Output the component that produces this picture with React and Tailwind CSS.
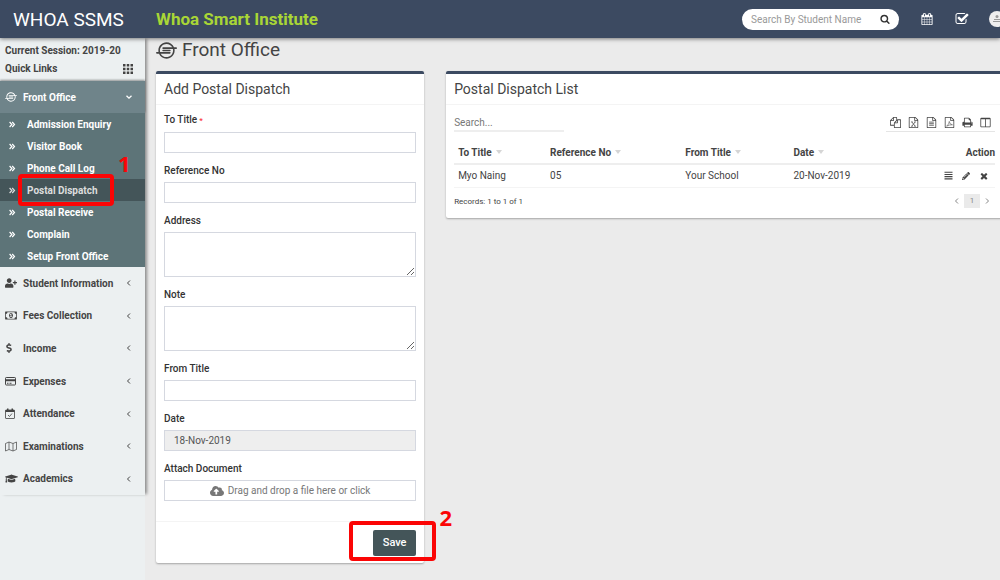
import { useState } from 'react';
import { FaCloudUploadAlt, FaDollarSign, FaGraduationCap, FaIoxhost, FaPencilAlt, FaUserPlus } from 'react-icons/fa';

const paths = {
    search: 'M1216 832q0-185-131.5-316.5t-316.5-131.5-316.5 131.5-131.5 316.5 131.5 316.5 316.5 131.5 316.5-131.5 131.5-316.5zm512 832q0 52-38 90t-90 38q-54 0-90-38l-343-342q-179 124-399 124-143 0-273.5-55.5t-225-150-150-225-55.5-273.5 55.5-273.5 150-225 225-150 273.5-55.5 273.5 55.5 225 150 150 225 55.5 273.5q0 220-124 399l343 343q37 37 37 90z',
    calendar: 'M192 1664h288v-288h-288v288zm352 0h320v-288h-320v288zm-352-352h288v-320h-288v320zm352 0h320v-320h-320v320zm-352-384h288v-288h-288v288zm736 736h320v-288h-320v288zm-384-736h320v-288h-320v288zm768 736h288v-288h-288v288zm-384-352h320v-320h-320v320zm-352-864v-288q0-13-9.5-22.5t-22.5-9.5h-64q-13 0-22.5 9.5t-9.5 22.5v288q0 13 9.5 22.5t22.5 9.5h64q13 0 22.5-9.5t9.5-22.5zm736 864h288v-320h-288v320zm-384-384h320v-288h-320v288zm384 0h288v-288h-288v288zm32-480v-288q0-13-9.5-22.5t-22.5-9.5h-64q-13 0-22.5 9.5t-9.5 22.5v288q0 13 9.5 22.5t22.5 9.5h64q13 0 22.5-9.5t9.5-22.5zm384-64v1280q0 52-38 90t-90 38h-1408q-52 0-90-38t-38-90v-1280q0-52 38-90t90-38h128v-96q0-66 47-113t113-47h64q66 0 113 47t47 113v96h384v-96q0-66 47-113t113-47h64q66 0 113 47t47 113v96h128q52 0 90 38t38 90z',
    task: 'M1472 930v318q0 119-84.5 203.5t-203.5 84.5h-832q-119 0-203.5-84.5t-84.5-203.5v-832q0-119 84.5-203.5t203.5-84.5h832q63 0 117 25 15 7 18 23 3 17-9 29l-49 49q-10 10-23 10-3 0-9-2-23-6-45-6h-832q-66 0-113 47t-47 113v832q0 66 47 113t113 47h832q66 0 113-47t47-113v-254q0-13 9-22l64-64q10-10 23-10 6 0 12 3 20 8 20 29zm231-489l-814 814q-24 24-57 24t-57-24l-430-430q-24-24-24-57t24-57l110-110q24-24 57-24t57 24l263 263 647-647q24-24 57-24t57 24l110 110q24 24 24 57t-24 57z',
    copy: 'M1696 384q40 0 68 28t28 68v1216q0 40-28 68t-68 28h-960q-40 0-68-28t-28-68v-288h-544q-40 0-68-28t-28-68v-672q0-40 20-88t48-76l408-408q28-28 76-48t88-20h416q40 0 68 28t28 68v328q68-40 128-40h416zm-544 213l-299 299h299v-299zm-640-384l-299 299h299v-299zm196 647l316-316v-416h-384v416q0 40-28 68t-68 28h-416v640h512v-256q0-40 20-88t48-76zm956 804v-1152h-384v416q0 40-28 68t-68 28h-416v640h896z',
    file: 'M1596 380q28 28 48 76t20 88v1152q0 40-28 68t-68 28h-1344q-40 0-68-28t-28-68v-1600q0-40 28-68t68-28h896q40 0 88 20t76 48zm-444-244v376h376q-10-29-22-41l-313-313q-12-12-41-22zm384 1528v-1024h-416q-40 0-68-28t-28-68v-416h-768v1536h1280z',
    print: 'M448 1536h896v-256h-896v256zm0-640h896v-384h-160q-40 0-68-28t-28-68v-160h-640v640zm1152 64q0-26-19-45t-45-19-45 19-19 45 19 45 45 19 45-19 19-45zm128 0v416q0 13-9.5 22.5t-22.5 9.5h-224v160q0 40-28 68t-68 28h-960q-40 0-68-28t-28-68v-160h-224q-13 0-22.5-9.5t-9.5-22.5v-416q0-79 56.5-135.5t135.5-56.5h64v-544q0-40 28-68t68-28h672q40 0 88 20t76 48l152 152q28 28 48 76t20 88v256h64q79 0 135.5 56.5t56.5 135.5z',
    columns: 'M224 1536h608v-1152h-640v1120q0 13 9.5 22.5t22.5 9.5zm1376-32v-1120h-640v1152h608q13 0 22.5-9.5t9.5-22.5zm128-1216v1216q0 66-47 113t-113 47h-1344q-66 0-113-47t-47-113v-1216q0-66 47-113t113-47h1344q66 0 113 47t47 113z',
    times: 'M1490 1322q0 40-28 68l-136 136q-28 28-68 28t-68-28l-294-294-294 294q-28 28-68 28t-68-28l-136-136q-28-28-28-68t28-68l294-294-294-294q-28-28-28-68t28-68l136-136q28-28 68-28t68 28l294 294 294-294q28-28 68-28t68 28l136 136q28 28 28 68t-28 68l-294 294 294 294q28 28 28 68z',
    money: 'M768 1152h384v-96h-128v-448h-114l-148 137 77 80q42-37 55-57h2v288h-128v96zm512-256q0 70-21 142t-59.5 134-101.5 101-138 39-138-39-101.5-101-59.5-134-21-142 21-142 59.5-134 101.5-101 138-39 138 39 101.5 101 59.5 134 21 142zm512 256v-512q-106 0-181-75t-75-181h-1152q0 106-75 181t-181 75v512q106 0 181 75t75 181h1152q0-106 75-181t181-75zm128-832v1152q0 26-19 45t-45 19h-1792q-26 0-45-19t-19-45v-1152q0-26 19-45t45-19h1792q26 0 45 19t19 45z',
};

const Icon = ({ name, size = 11, children }) => (
    <svg width={size} height={size} viewBox="0 0 1792 1792" fill="currentColor" className="shrink-0" aria-hidden="true">
        <path d={paths[name]} />
        {children}
    </svg>
);

const MoneyIcon = () => (
    <svg width="12" height="11" viewBox="0 0 1920 1792" fill="currentColor" aria-hidden="true">
        <path d={paths.money} />
    </svg>
);

const CardIcon = () => (
    <svg width="11" height="10" viewBox="0 0 22 20" fill="none" stroke="currentColor" strokeWidth="2" aria-hidden="true">
        <rect x="1" y="3" width="20" height="15" rx="1.5" />
        <path d="M1 8.5h20" strokeWidth="4" />
        <path d="M4 14.5h3M9 14.5h4" />
    </svg>
);

const AttendanceIcon = () => (
    <svg width="10" height="11" viewBox="0 0 20 22" fill="none" stroke="currentColor" strokeWidth="1.6" aria-hidden="true">
        <rect x="1" y="4" width="18" height="17" rx="1" />
        <path d="M1 6h18" strokeWidth="4" />
        <path d="M5.5 1v5M14.5 1v5" strokeWidth="3" />
        <path d="m6 14 3 3 5-6" />
    </svg>
);

const MapIcon = () => (
    <svg width="12" height="11" viewBox="0 0 24 22" fill="none" stroke="currentColor" strokeWidth="1.4" aria-hidden="true">
        <path d="M1 5 8 2l8 3 7-3v15l-7 3-8-3-7 3zM8 2v15M16 5v15" />
    </svg>
);

const BarsIcon = () => (
    <svg width="9" height="9" viewBox="0 0 9 9" fill="currentColor" aria-hidden="true">
        <path d="M0.5 0.7h8v1.1h-8zM0.5 2.9h8V4h-8zM0.5 5.1h8v1.1h-8zM0.5 7.3h8v1.1h-8z" />
    </svg>
);

const Angle = ({ dir = 'left', size = 8 }) => {
    const d = { left: 'M5 1.5 2.5 4 5 6.5', right: 'M3 1.5 5.5 4 3 6.5', down: 'M1.5 2.7 4 5.2 6.5 2.7' }[dir];
    return (
        <svg width={size} height={size} viewBox="0 0 8 8" fill="none" stroke="currentColor" strokeWidth={dir === 'down' ? 1.3 : 1} className="shrink-0" aria-hidden="true">
            <path d={d} />
        </svg>
    );
};

const DoubleAngle = () => (
    <svg width="7" height="7" viewBox="0 0 7 7" fill="none" stroke="currentColor" strokeWidth="1.2" aria-hidden="true">
        <path d="M0.6 1 2.9 3.5 0.6 6M3.2 1 5.5 3.5 3.2 6" />
    </svg>
);

const GridIcon = () => (
    <svg width="10" height="10" viewBox="0 0 10 10" fill="currentColor" aria-hidden="true">
        {[0, 4, 8].map(y => [0, 4, 8].map(x => (
            <rect key={`${x}-${y}`} x={x - x / 16} y={y - y / 16} width="2.5" height="2.5" />
        )))}
    </svg>
);

const frontOffice = [
    'Admission Enquiry', 'Visitor Book', 'Phone Call Log', 'Postal Dispatch',
    'Postal Receive', 'Complain', 'Setup Front Office',
];

const menu = [
    { label: 'Student Information', icon: <FaUserPlus size={12} /> },
    { label: 'Fees Collection', icon: <MoneyIcon /> },
    { label: 'Income', icon: <FaDollarSign size={10} className="-ml-px" /> },
    { label: 'Expenses', icon: <CardIcon /> },
    { label: 'Attendance', icon: <AttendanceIcon /> },
    { label: 'Examinations', icon: <MapIcon /> },
    { label: 'Academics', icon: <FaGraduationCap size={13} /> },
];

const exportTools = [
    { label: 'Copy', icon: <Icon name="copy" /> },
    {
        label: 'Excel',
        icon: <Icon name="file"><path d="M620 800 1170 1500M1170 800 620 1500M520 800h250M1020 800h250M520 1500h250M1020 1500h250" fill="none" stroke="currentColor" strokeWidth="120" /></Icon>,
    },
    {
        label: 'CSV',
        icon: <Icon name="file"><path d="M512 832h768M512 1088h768M512 1344h768" fill="none" stroke="currentColor" strokeWidth="128" /></Icon>,
    },
    {
        label: 'PDF',
        icon: <Icon name="file"><path d="M420 1500Q860 1150 860 720Q900 1230 1380 1270Q900 1230 420 1500" fill="none" stroke="currentColor" strokeWidth="90" /></Icon>,
    },
    { label: 'Print', icon: <Icon name="print" /> },
    { label: 'Columns', icon: <Icon name="columns" /> },
];

const SidebarLink = ({ label, icon }) => (
    <a href="#" className="flex h-full items-center pl-[5px] pr-3">
        <span className="flex w-[18px] shrink-0">{icon}</span>
        <span className="flex-1">{label}</span>
        <Angle />
    </a>
);

const Field = ({ id, label, required, children }) => (
    <div className="mb-[10px]">
        <label htmlFor={id} className="mb-1 block text-[10px] leading-[15px] font-medium text-[#333]">
            {label}
            {required && <span className="text-[8px] text-red-500"> *</span>}
        </label>
        {children}
    </div>
);

const Card = ({ title, children }) => (
    <section className="rounded-[2px] border-t-[3px] border-[#3c4a61] bg-white shadow-[0_1px_2px_rgba(0,0,0,0.3)]">
        <h2 className="border-b border-[#f4f4f4] px-2 text-[14px] leading-[30px] text-[#444]">{title}</h2>
        {children}
    </section>
);

const inputClass = 'block h-[21px] w-full border border-[#d5d8e0] px-[9px] text-[10px] outline-none';
const areaClass = 'block h-[45px] w-full resize-y border border-[#d5d8e0] px-[9px] text-[10px] outline-none';

const App = () => {
    const [query, setQuery] = useState('');

    return (
        <div className="min-h-screen overflow-hidden bg-[#ebebeb] font-['Roboto',sans-serif] text-[#444]">
            {/* Top bar */}
            <header className="relative z-10 flex h-[38px] items-center bg-[#3c4a61] text-white shadow-[0_1px_4px_rgba(0,0,0,0.5)]">
                <a href="#" className="w-[145px] shrink-0 pl-[13px] text-[19px] leading-[37px]">WHOA SSMS</a>
                <span className="flex-1 pl-[11px] text-[17px] leading-[37px] font-bold text-[#a9d636]">Whoa Smart Institute</span>
                <form className="mr-[22px] flex h-[21px] w-[157px] items-center rounded-full bg-white pl-[9px] pr-[9px]">
                    <input
                        type="text"
                        aria-label="Search By Student Name"
                        placeholder="Search By Student Name"
                        className="w-[111px] text-[10px] text-[#444] outline-none placeholder:text-[#999]"
                    />
                    <button type="button" aria-label="Search" className="ml-auto text-[#333]"><Icon name="search" size={10} /></button>
                </form>
                <button type="button" aria-label="Calendar" className="mr-[22px]"><Icon name="calendar" size={12} /></button>
                <button type="button" aria-label="Tasks" className="mr-5"><Icon name="task" size={14} /></button>
                <button type="button" aria-label="Account" className="-mr-[5px] flex size-4 items-center justify-center rounded-full bg-[#eee] text-[#999]">
                    <svg width="10" height="10" viewBox="0 0 10 10" fill="currentColor" aria-hidden="true">
                        <circle cx="5" cy="2.5" r="1.5" />
                        <path d="M2 5h6v1H2zM1 7h8v1H1z" />
                    </svg>
                </button>
            </header>

            <div className="flex min-h-[calc(100vh-38px)]">
                {/* Sidebar */}
                <aside className="w-[145px] shrink-0 bg-[#ecf0f1] text-[10px] font-bold">
                    <div className="shadow-[3px_0_3px_-1px_rgba(0,0,0,0.4)]">
                        <div className="pt-1 pr-3 pb-[3px] pl-[5px] leading-[18px]">
                            <p>Current Session: 2019-20</p>
                            <a href="#" className="flex items-center justify-between">Quick Links <GridIcon /></a>
                        </div>
                        <nav>
                            <a href="#" className="flex h-8 items-center bg-[#6f848a] pl-[5px] pr-3 text-white shadow-[0_-1px_2px_rgba(0,0,0,0.4)]">
                                <span className="w-[18px]"><FaIoxhost size={12} /></span>
                                <span className="flex-1">Front Office</span>
                                <Angle dir="down" />
                            </a>
                            <ul className="bg-[#5d7478] text-white">
                                {frontOffice.map(item => (
                                    <li key={item} className="relative">
                                        <a
                                            href="#"
                                            className={`flex h-[22px] items-center pl-[9px] ${item === 'Postal Dispatch' ? 'bg-[#445559] text-[#ddd]' : ''}`}
                                        >
                                            <span className="w-[18px]"><DoubleAngle /></span>
                                            {item}
                                        </a>
                                        {item === 'Postal Dispatch' && (
                                            <>
                                                <span className="absolute -top-[5px] left-[18px] h-8 w-24 rounded-[4px] border-4 border-[#fb0505]" />
                                                <span className="absolute bottom-6 left-[118px] font-['Open_Sans',sans-serif] text-[22px] leading-7 text-[#fb0505]">1</span>
                                            </>
                                        )}
                                    </li>
                                ))}
                            </ul>
                            <ul className="flex h-[228px] flex-col">
                                {menu.map(item => (
                                    <li key={item.label} className="flex-1"><SidebarLink {...item} /></li>
                                ))}
                            </ul>
                        </nav>
                    </div>
                </aside>

                {/* Content */}
                <main className="-mr-[3px] min-w-0 flex-1 pl-[11px]">
                    <h1 className="flex h-[33px] items-center gap-[5px] pb-[9px] text-[19px]">
                        <FaIoxhost size={21} /> Front Office
                    </h1>
                    <div className="grid grid-cols-[13fr_27fr] items-start gap-[22px]">
                        <Card title="Add Postal Dispatch">
                            <form>
                                <div className="px-2 pt-[7px] pb-[10px]">
                                    <Field id="to" label="To Title" required><input id="to" type="text" className={inputClass} /></Field>
                                    <Field id="ref" label="Reference No"><input id="ref" type="text" className={inputClass} /></Field>
                                    <Field id="address" label="Address"><textarea id="address" className={areaClass} /></Field>
                                    <Field id="note" label="Note"><textarea id="note" className={areaClass} /></Field>
                                    <Field id="from" label="From Title"><input id="from" type="text" className={inputClass} /></Field>
                                    <Field id="date" label="Date">
                                        <input id="date" type="text" readOnly value="18-Nov-2019" className={`${inputClass} bg-[#eee] text-[#555]`} />
                                    </Field>
                                    <Field id="file" label="Attach Document">
                                        <div className="relative flex h-[21px] items-center justify-center gap-1 border border-[#d5d8e0] text-[10px] text-[#777]">
                                            <FaCloudUploadAlt size={14} /> Drag and drop a file here or click
                                            <input id="file" type="file" className="absolute inset-0 opacity-0" />
                                        </div>
                                    </Field>
                                </div>
                                <div className="flex justify-end border-t border-[#f4f4f4] px-2 py-[7px]">
                                    <div className="relative">
                                        <button type="button" className="h-[26px] w-[43px] rounded-[2px] bg-[#445559] text-[11px] font-medium text-white">Save</button>
                                        <span className="pointer-events-none absolute -top-2 -right-5 h-10 w-[87px] rounded-[4px] border-4 border-[#fb0505]" />
                                        <span className="absolute -top-[26px] -right-9 font-['Open_Sans',sans-serif] text-[22px] leading-7 font-bold text-[#fb0505]">2</span>
                                    </div>
                                </div>
                            </form>
                        </Card>

                        <Card title="Postal Dispatch List">
                            <div className="px-2 pt-2 pb-[10px]">
                                <div className="flex items-end justify-between">
                                    <input
                                        type="text"
                                        aria-label="Search records"
                                        placeholder="Search..."
                                        value={query}
                                        onChange={(e) => setQuery(e.target.value)}
                                        className="h-[19px] w-[110px] border-b-2 border-[#eee] pt-0.5 text-[10px] outline-none placeholder:text-[#777]"
                                    />
                                    <div className="flex h-[19px] items-center gap-[7px] border-b border-[#e5e5e5] px-1">
                                        {exportTools.map(tool => (
                                            <button key={tool.label} type="button" aria-label={tool.label}>{tool.icon}</button>
                                        ))}
                                    </div>
                                </div>
                                <table className="mt-[7px] w-full table-fixed text-left text-[10px]">
                                    <thead>
                                        <tr className="h-[25px] border-b-2 border-[#eee]">
                                            {[['To Title', 'w-[17%]'], ['Reference No', 'w-[25%]'], ['From Title', 'w-[20%]'], ['Date', 'w-[20%]']].map(([label, width]) => (
                                                <th key={label} className={`pt-0.5 pl-1 font-bold ${width}`}>
                                                    <span className="flex items-center gap-1">
                                                        {label}
                                                        <svg width="6" height="4" viewBox="0 0 6 4" className="fill-[#d5d5d5]" aria-hidden="true"><path d="M0 0h6L3 4z" /></svg>
                                                    </span>
                                                </th>
                                            ))}
                                            <th className="pt-0.5 text-right font-bold">Action</th>
                                        </tr>
                                    </thead>
                                    <tbody>
                                        <tr className="h-[23px] border-b border-[#f4f4f4]">
                                            <td className="pl-1">Myo Naing</td>
                                            <td className="pl-1">05</td>
                                            <td className="pl-1">Your School</td>
                                            <td className="pl-1">20-Nov-2019</td>
                                            <td>
                                                <div className="flex items-center justify-end gap-[9px] pr-[6px]">
                                                    <button type="button" aria-label="View"><BarsIcon /></button>
                                                    <button type="button" aria-label="Edit"><FaPencilAlt size={8} /></button>
                                                    <button type="button" aria-label="Delete"><Icon name="times" size={10} /></button>
                                                </div>
                                            </td>
                                        </tr>
                                    </tbody>
                                </table>
                                <div className="mt-[6px] flex items-end justify-between text-[8px]">
                                    <p>Records: 1 to 1 of 1</p>
                                    <div className="flex items-center gap-[3px] pr-1 text-[#888]">
                                        <button type="button" aria-label="Previous page"><Angle /></button>
                                        <button type="button" className="h-[14px] w-4 bg-[#eaeaea]">1</button>
                                        <button type="button" aria-label="Next page"><Angle dir="right" /></button>
                                    </div>
                                </div>
                            </div>
                        </Card>
                    </div>
                </main>
            </div>
        </div>
    );
};
export default App;
